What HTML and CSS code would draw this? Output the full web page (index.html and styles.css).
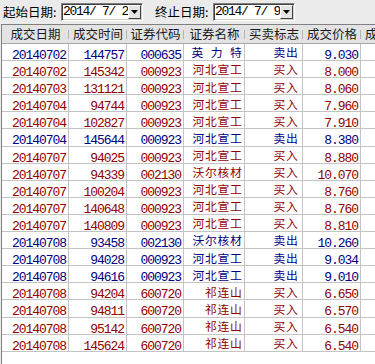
FILE: index.html
```html
<!DOCTYPE html>
<html lang="zh-CN">
<head>
<meta charset="utf-8">
<title>成交查询</title>
<link rel="stylesheet" href="styles.css">
</head>
<body>
<div class="app">
  <div class="toolbar">
    <span class="label">起始日期:</span>
    <div class="combo">
      <span class="combo-text">2014/ 7/ 2</span>
      <span class="combo-btn"><svg width="7" height="4" viewBox="0 0 7 4"><path d="M0 0H7L3.5 4Z" fill="#000"/></svg></span>
    </div>
    <span class="label label-end">终止日期:</span>
    <div class="combo">
      <span class="combo-text">2014/ 7/ 9</span>
      <span class="combo-btn"><svg width="7" height="4" viewBox="0 0 7 4"><path d="M0 0H7L3.5 4Z" fill="#000"/></svg></span>
    </div>
  </div>
  <div class="list">
    <div class="row head">
      <div class="hc">成交日期</div>
      <div class="hc">成交时间</div>
      <div class="hc">证券代码</div>
      <div class="hc">证券名称</div>
      <div class="hc">买卖标志</div>
      <div class="hc">成交价格</div>
      <div class="hc">成交数量</div>
    </div>
    <div class="row r sell"><div class="c n">20140702</div><div class="c n">144757</div><div class="c n">000635</div><div class="c t spaced">英 力 特</div><div class="c t bs">卖出</div><div class="c n">9.030</div><div class="c"></div></div>
    <div class="row r buy"><div class="c n">20140702</div><div class="c n">145342</div><div class="c n">000923</div><div class="c t">河北宣工</div><div class="c t bs">买入</div><div class="c n">8.000</div><div class="c"></div></div>
    <div class="row r buy"><div class="c n">20140703</div><div class="c n">131121</div><div class="c n">000923</div><div class="c t">河北宣工</div><div class="c t bs">买入</div><div class="c n">8.060</div><div class="c"></div></div>
    <div class="row r buy"><div class="c n">20140704</div><div class="c n">94744</div><div class="c n">000923</div><div class="c t">河北宣工</div><div class="c t bs">买入</div><div class="c n">7.960</div><div class="c"></div></div>
    <div class="row r buy"><div class="c n">20140704</div><div class="c n">102827</div><div class="c n">000923</div><div class="c t">河北宣工</div><div class="c t bs">买入</div><div class="c n">7.910</div><div class="c"></div></div>
    <div class="row r sell"><div class="c n">20140704</div><div class="c n">145644</div><div class="c n">000923</div><div class="c t">河北宣工</div><div class="c t bs">卖出</div><div class="c n">8.380</div><div class="c"></div></div>
    <div class="row r buy"><div class="c n">20140707</div><div class="c n">94025</div><div class="c n">000923</div><div class="c t">河北宣工</div><div class="c t bs">买入</div><div class="c n">8.880</div><div class="c"></div></div>
    <div class="row r buy"><div class="c n">20140707</div><div class="c n">94339</div><div class="c n">002130</div><div class="c t">沃尔核材</div><div class="c t bs">买入</div><div class="c n">10.070</div><div class="c"></div></div>
    <div class="row r buy"><div class="c n">20140707</div><div class="c n">100204</div><div class="c n">000923</div><div class="c t">河北宣工</div><div class="c t bs">买入</div><div class="c n">8.760</div><div class="c"></div></div>
    <div class="row r buy"><div class="c n">20140707</div><div class="c n">140648</div><div class="c n">000923</div><div class="c t">河北宣工</div><div class="c t bs">买入</div><div class="c n">8.760</div><div class="c"></div></div>
    <div class="row r buy"><div class="c n">20140707</div><div class="c n">140809</div><div class="c n">000923</div><div class="c t">河北宣工</div><div class="c t bs">买入</div><div class="c n">8.810</div><div class="c"></div></div>
    <div class="row r sell"><div class="c n">20140708</div><div class="c n">93458</div><div class="c n">002130</div><div class="c t">沃尔核材</div><div class="c t bs">卖出</div><div class="c n">10.260</div><div class="c"></div></div>
    <div class="row r sell"><div class="c n">20140708</div><div class="c n">94028</div><div class="c n">000923</div><div class="c t">河北宣工</div><div class="c t bs">卖出</div><div class="c n">9.034</div><div class="c"></div></div>
    <div class="row r sell"><div class="c n">20140708</div><div class="c n">94616</div><div class="c n">000923</div><div class="c t">河北宣工</div><div class="c t bs">卖出</div><div class="c n">9.010</div><div class="c"></div></div>
    <div class="row r buy"><div class="c n">20140708</div><div class="c n">94204</div><div class="c n">600720</div><div class="c t">祁连山</div><div class="c t bs">买入</div><div class="c n">6.650</div><div class="c"></div></div>
    <div class="row r buy"><div class="c n">20140708</div><div class="c n">94811</div><div class="c n">600720</div><div class="c t">祁连山</div><div class="c t bs">买入</div><div class="c n">6.570</div><div class="c"></div></div>
    <div class="row r buy"><div class="c n">20140708</div><div class="c n">95142</div><div class="c n">600720</div><div class="c t">祁连山</div><div class="c t bs">买入</div><div class="c n">6.540</div><div class="c"></div></div>
    <div class="row r buy"><div class="c n">20140708</div><div class="c n">145624</div><div class="c n">600720</div><div class="c t">祁连山</div><div class="c t bs">买入</div><div class="c n">6.540</div><div class="c"></div></div>
  </div>
</div>
</body>
</html>
```

FILE: styles.css
```css
html, body {
  margin: 0;
  padding: 0;
  height: 364px;
  overflow: hidden;
}

body {
  background: #ebebeb;
  font-family: "Noto Sans CJK SC", "Noto Sans", sans-serif;
  color: #000;
}

.app {
  width: 375px;
  height: 364px;
  overflow: hidden;
}

.toolbar {
  height: 24px;
  box-sizing: border-box;
  display: flex;
  align-items: center;
  padding-left: 3px;
}

.label {
  width: 58px;
  font-size: 12.5px;
  line-height: 14px;
  white-space: nowrap;
}

.label-end {
  margin-left: 12px;
}

.combo {
  width: 82px;
  height: 18px;
  box-sizing: border-box;
  background: #fff;
  border: 1px solid;
  border-color: #808080 #ffffff #ffffff #808080;
  box-shadow: inset 1px 1px 0 #404040, inset -1px -1px 0 #d4d0c8;
  display: flex;
  align-items: center;
  justify-content: space-between;
}

.combo-text {
  align-self: flex-start;
  padding-top: 1px;
  padding-left: 1px;
  font: 13px/14px "Liberation Mono", monospace;
  letter-spacing: -1.3px;
  white-space: pre;
}

.combo-btn {
  width: 15px;
  height: 14px;
  margin-right: 1px;
  box-sizing: border-box;
  background: #e4e4e4;
  border: 1px solid;
  border-color: #ffffff #404040 #404040 #ffffff;
  display: flex;
  align-items: center;
  justify-content: center;
}

.combo-btn svg {
  display: block;
}

.list {
  height: 340px;
  box-sizing: border-box;
  margin-left: 1px;
  border-top: 1px solid #808080;
  border-left: 1px solid #808080;
  background: #fff;
  overflow: hidden;
}

.row {
  display: grid;
  grid-template-columns: 67px 58px 57px 61px 58px 58px 58px;
  width: max-content;
}

.head {
  height: 19px;
  box-sizing: border-box;
  background: #e3e3e3;
  border-bottom: 1px solid #a8a8a8;
}

.hc {
  position: relative;
  text-align: center;
  font-size: 12.5px;
  line-height: 18px;
  color: #1a1a1a;
  white-space: nowrap;
}

.hc::after {
  content: "";
  position: absolute;
  right: 0;
  top: 5px;
  bottom: 4px;
  width: 1px;
  background: #b4b4b4;
}

.r {
  height: 17.1px;
}

.c {
  box-sizing: border-box;
  height: 17.1px;
  border-right: 1px solid #c4c4c4;
  border-bottom: 1px solid #c4c4c4;
  text-align: right;
  padding-right: 2px;
  white-space: nowrap;
}

.n {
  font: 13px/14px "Liberation Mono", monospace;
  letter-spacing: -1.05px;
  padding-top: 5px;
}

.t {
  font-size: 11.8px;
  letter-spacing: 0.7px;
  line-height: 14px;
  padding-top: 1.4px;
  padding-right: 1.4px;
}

.bs {
  padding-right: 3.4px;
}

.spaced {
  word-spacing: 3.45px;
}

.sell {
  color: #000080;
}

.buy {
  color: #900000;
}
```
